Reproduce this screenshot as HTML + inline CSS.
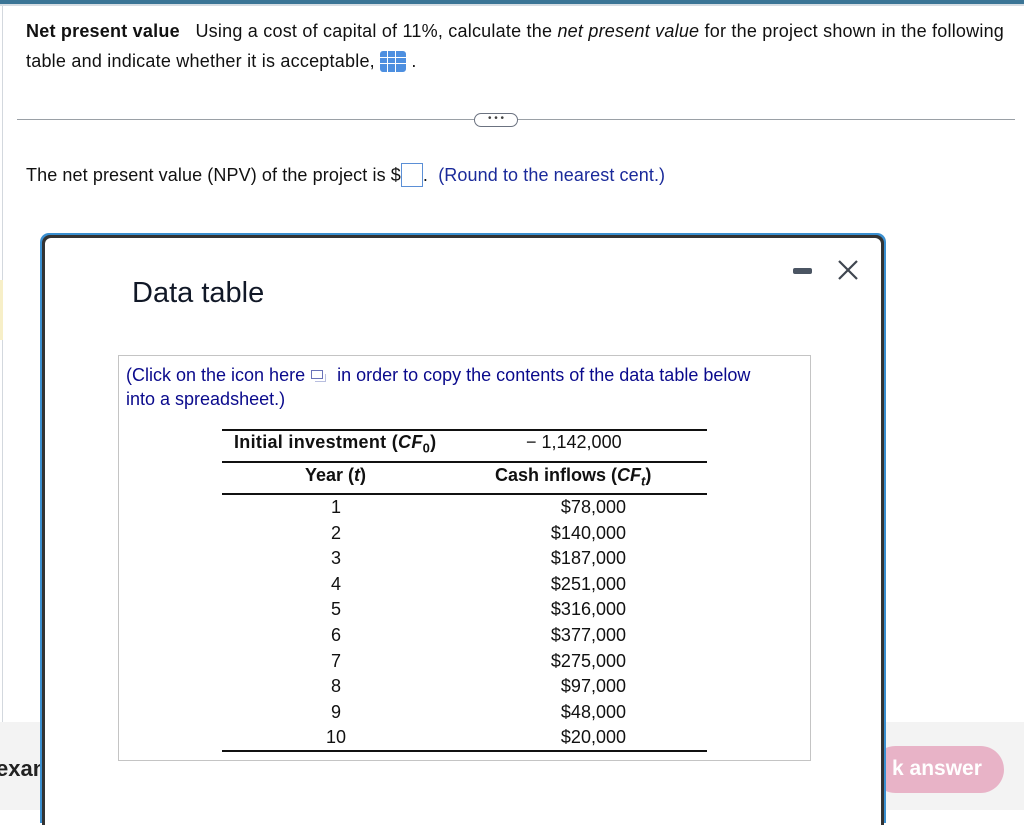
<!DOCTYPE html>
<html><head><style>
body{margin:0;width:1024px;height:810px;overflow:hidden;background:#fff;font-family:"Liberation Sans",Arial,sans-serif;position:relative;color:#000}
.a{position:absolute}
</style></head><body>
<div class="a" style="left:0;top:0;width:1024px;height:4px;background:#3b7596"></div>
<div class="a" style="left:0;top:4px;width:1024px;height:2px;background:#d6dde3"></div>
<div class="a" style="left:2px;top:6px;width:1px;height:716px;background:#d3d8de"></div>
<div class="a" style="left:0;top:280px;width:3px;height:60px;background:#f7efc8"></div>
<div class="a" style="left:26px;top:16px;font-size:18px;line-height:30px;color:#111;width:995px;white-space:nowrap;letter-spacing:0.22px"><b>Net present value</b>&nbsp;&nbsp; Using a cost of capital of 11%, calculate the <i>net present value</i> for the project shown in the following<br>table and indicate whether it is acceptable, <span style="display:inline-block;width:26px;height:21px;background:#4d8fe0;border-radius:3px;vertical-align:-5px;position:relative;background-image:linear-gradient(90deg,transparent 7px,#fff 7px,#fff 8px,transparent 8px,transparent 15px,#fff 15px,#fff 16px,transparent 16px),linear-gradient(transparent 6px,#fff 6px,#fff 7px,transparent 7px,transparent 12px,#fff 12px,#fff 13px,transparent 13px)"></span> .</div>
<div class="a" style="left:17px;top:119px;width:998px;height:1px;background:#9aa0a6"></div>
<div class="a" style="left:474px;top:113px;width:42px;height:12px;border:1px solid #6b7280;border-radius:7px;background:#fff;font-size:10px;line-height:9px;text-align:center;color:#444">• • •</div>
<div class="a" style="left:26px;top:163px;font-size:18px;color:#111;white-space:nowrap;letter-spacing:0.1px">The net present value (NPV) of the project is $<span style="display:inline-block;width:20px;height:22px;border:1px solid #5b8fd6;vertical-align:-6px"></span>. &nbsp;<span style="color:#1a2a9a">(Round to the nearest cent.)</span></div>
<div class="a" style="left:0;top:722px;width:1024px;height:88px;background:#f3f3f3"></div>
<div class="a" style="left:-4px;top:756px;font-size:22px;font-weight:bold;color:#222">exan</div>
<div class="a" style="left:872px;top:746px;width:132px;height:47px;border-radius:24px;background:#e8b3c7"></div>
<div class="a" style="left:892px;top:757px;font-size:21px;font-weight:bold;color:#fff">k answer</div>
<div class="a" style="left:40px;top:233px;width:846px;height:590px;background:#3a8fd0;border-radius:9px 9px 0 0"></div>
<div class="a" style="left:42px;top:235px;width:842px;height:590px;background:#333;border-radius:8px 8px 0 0"></div>
<div class="a" style="left:45px;top:238px;width:836px;height:590px;background:#fff;border-radius:6px 6px 0 0"></div>
<div class="a" style="left:132px;top:277px;font-size:29px;color:#111827">Data table</div>
<div class="a" style="left:793px;top:268px;width:19px;height:6px;background:#4b5563;border-radius:2px"></div>
<svg class="a" style="left:836px;top:258px" width="24" height="24"><path d="M3 3L21 21M21 3L3 21" stroke="#3f4650" stroke-width="2.2"/></svg>
<div class="a" style="left:118px;top:355px;width:691px;height:404px;border:1px solid #c4c4c4"></div>
<div class="a" style="left:126px;top:363px;font-size:18px;line-height:24px;color:#0a0a8c;width:680px;white-space:nowrap">(Click on the icon here <span style="display:inline-block;width:17px;height:14px;position:relative;vertical-align:-2px"><span class="a" style="left:1px;top:1px;width:10px;height:7px;border:1.5px solid #6a73b8"></span><span class="a" style="left:5px;top:5px;width:10px;height:7px;border:1.5px solid #b8bedf;border-left:none;border-top:none"></span></span> &nbsp;in order to copy the contents of the data table below<br>into a spreadsheet.)</div>
<div class="a" style="left:222px;top:429px;width:485px;height:2px;background:#111"></div>
<div class="a" style="left:222px;top:461px;width:485px;height:2px;background:#111"></div>
<div class="a" style="left:222px;top:493px;width:485px;height:2px;background:#111"></div>
<div class="a" style="left:222px;top:750px;width:485px;height:2px;background:#111"></div>
<div class="a" style="left:234px;top:432px;font-size:18px;font-weight:bold;color:#111;letter-spacing:0.3px">Initial investment (<i>CF</i><sub style="font-size:13px">0</sub>)</div>
<div class="a" style="left:526px;top:432px;font-size:18px;color:#111">&minus; 1,142,000</div>
<div class="a" style="left:305px;top:465px;font-size:18px;font-weight:bold;color:#111">Year (<i>t</i>)</div>
<div class="a" style="left:495px;top:465px;font-size:18px;font-weight:bold;color:#111">Cash inflows (<i>CF</i><sub style="font-size:13px"><i>t</i></sub>)</div>
<div class="a" style="left:296px;top:495px;width:80px;text-align:center;font-size:18px;line-height:25.6px;color:#111">1<br>2<br>3<br>4<br>5<br>6<br>7<br>8<br>9<br>10</div>
<div class="a" style="left:506px;top:495px;width:120px;text-align:right;font-size:18px;line-height:25.6px;color:#111">$78,000<br>$140,000<br>$187,000<br>$251,000<br>$316,000<br>$377,000<br>$275,000<br>$97,000<br>$48,000<br>$20,000</div>
</body></html>
